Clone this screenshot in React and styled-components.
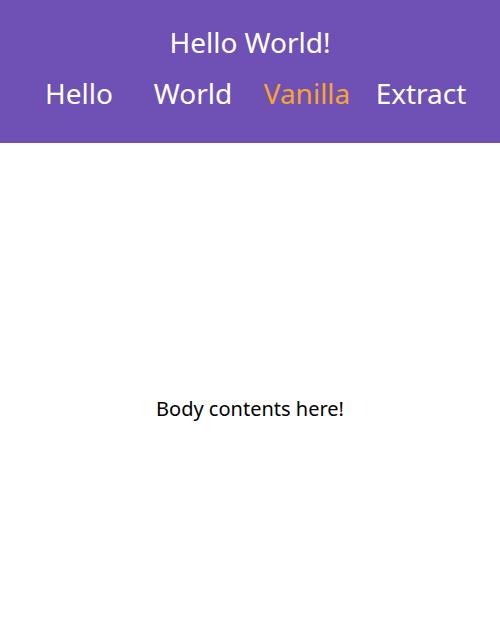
import styled, { createGlobalStyle } from "styled-components";

const links = [
  { label: "Hello", active: false },
  { label: "World", active: false },
  { label: "Vanilla", active: true },
  { label: "Extract", active: false },
];

export default function App() {
  return (
    <>
      <GlobalStyle />
      <Page>
        <Header>
          <Title>Hello World!</Title>
          <Nav>
            {links.map((link) => (
              <NavLink key={link.label} $active={link.active}>
                {link.label}
              </NavLink>
            ))}
          </Nav>
        </Header>
        <Body>
          <BodyText>Body contents here!</BodyText>
        </Body>
      </Page>
    </>
  );
}

const GlobalStyle = createGlobalStyle`
  html, body {
    margin: 0;
    padding: 0;
    background: #ffffff;
  }

  body {
    font-family: "Segoe UI", "Noto Sans", "Open Sans", sans-serif;
  }
`;

const Page = styled.div`
  min-height: 641px;
  display: flex;
  flex-direction: column;
`;

const Header = styled.header`
  background-color: #6f50b5;
  height: 143px;
  box-sizing: border-box;
  padding-top: 22px;
  display: flex;
  flex-direction: column;
  align-items: center;
`;

const Title = styled.h1`
  margin: 0;
  font-size: 28px;
  font-weight: 400;
  line-height: 40px;
  color: #ffffff;
`;

const Nav = styled.nav`
  width: 100%;
  box-sizing: border-box;
  padding: 0 22px;
  margin-top: 11px;
  display: grid;
  grid-template-columns: repeat(4, 1fr);
`;

const NavLink = styled.span`
  text-align: center;
  font-size: 28px;
  line-height: 40px;
  color: ${(p) => (p.$active ? "#f7a531" : "#ffffff")};
`;

const Body = styled.main`
  flex: 1;
  display: flex;
  justify-content: center;
  padding-top: 252px;
`;

const BodyText = styled.p`
  margin: 0;
  font-size: 20px;
  line-height: 28px;
  color: #000000;
`;
